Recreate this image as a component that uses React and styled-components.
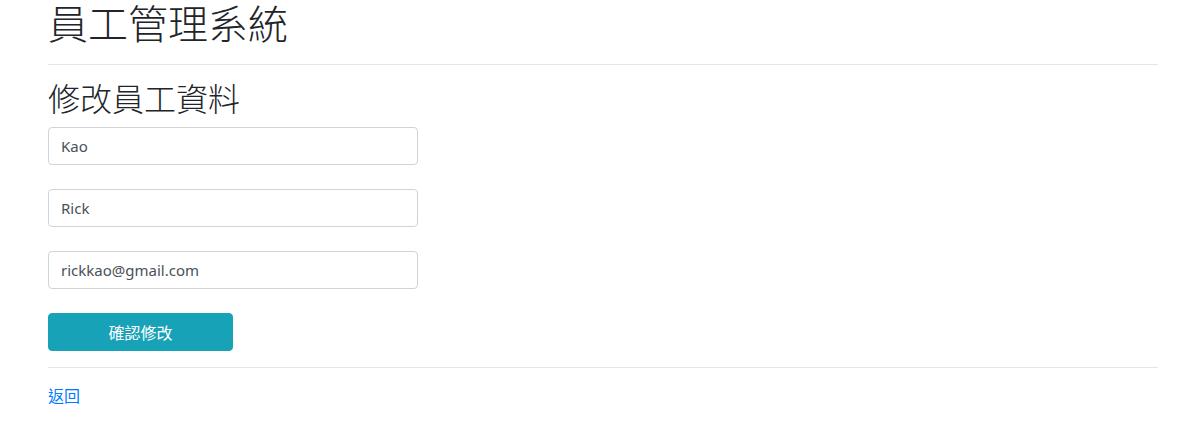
import React from "react";
import styled, { createGlobalStyle } from "styled-components";

const GlobalStyle = createGlobalStyle`
    body {
        margin: 0;
        background: #fff;
        color: #212529;
        font-family: "Noto Sans", "Noto Sans CJK TC", sans-serif;
        font-size: 16px;
        line-height: 1.5;
    }
    * { box-sizing: border-box; }
`

export default function App() {
    const fields = [
        { name: "lastName", value: "Kao" },
        { name: "firstName", value: "Rick" },
        { name: "email", value: "rickkao@gmail.com" },
    ];

    //stops the page from reloading on submit
    function handleSubmit(e) {
        e.preventDefault();
    }

    return (
        <Container>
            <GlobalStyle />
            <Title>員工管理系統</Title>
            <Divider />
            <SubTitle>修改員工資料</SubTitle>
            <form onSubmit={handleSubmit}>
                {fields.map(f => (
                    <FormGroup key={f.name}>
                        <Input name={f.name} defaultValue={f.value} />
                    </FormGroup>
                ))}
                <SubmitButton type="submit">確認修改</SubmitButton>
            </form>
            <Divider />
            <BackLink href="#">返回</BackLink>
        </Container>
    )
}

const Container = styled.div`
    width: 1110px;
    margin-left: 48px;
`

const Title = styled.h1`
    margin: 0;
    padding: 0 0 4px;
    font-size: 40px;
    font-weight: 300;
    line-height: 44px;
    font-family: "Noto Sans CJK TC", sans-serif;
    color: #212529;
`

const SubTitle = styled.h2`
    margin: 0 0 8px;
    padding: 0 0 6px;
    font-size: 32px;
    font-weight: 300;
    line-height: 32px;
    font-family: "Noto Sans CJK TC", sans-serif;
    color: #212529;
`

const Divider = styled.hr`
    margin: 16px 0;
    border: 0;
    border-top: 1px solid rgba(0, 0, 0, 0.1);
`

const FormGroup = styled.div`
    margin-bottom: 24px;
`

const Input = styled.input`
    display: block;
    width: 370px;
    height: 38px;
    padding: 6px 12px;
    font-family: "Noto Sans", "Noto Sans CJK TC", sans-serif;
    font-size: 15px;
    color: #495057;
    background: #fff;
    border: 1px solid #ced4da;
    border-radius: 4px;
    outline: none;
`

const SubmitButton = styled.button`
    display: block;
    width: 185px;
    height: 38px;
    padding: 6px 12px;
    font-family: "Noto Sans CJK TC", sans-serif;
    font-size: 16px;
    color: #fff;
    background: #17a2b8;
    border: 1px solid #17a2b8;
    border-radius: 4px;
    cursor: pointer;
`

const BackLink = styled.a`
    display: inline-block;
    font-family: "Noto Sans CJK TC", sans-serif;
    line-height: 22px;
    color: #007bff;
    text-decoration: none;
`
